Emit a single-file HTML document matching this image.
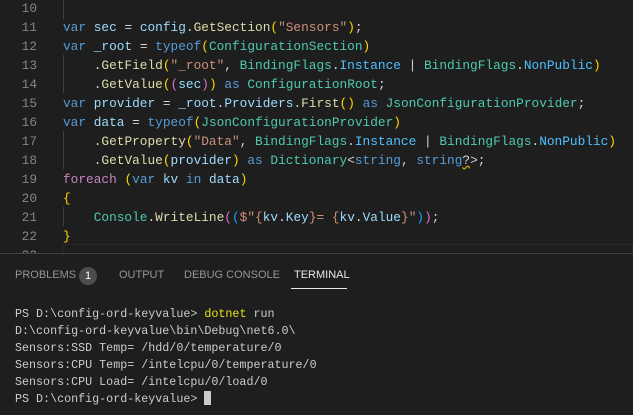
<!DOCTYPE html>
<html><head><meta charset="utf-8"><style>
body{margin:0;width:633px;height:414px;background:#1e1e1e;overflow:hidden;position:relative;font-family:"Liberation Mono",monospace}
.ed{position:absolute;left:0;top:0;width:633px;height:253px;overflow:hidden}
.l{position:absolute;left:0;height:19px;line-height:19px;font-size:12.8px;white-space:pre;color:#d4d4d4}
.n{position:absolute;left:0;width:37px;text-align:right;color:#858585}
.c{position:absolute;left:63px}
.g{position:absolute;left:63px;width:1px;background:#404040}
.k{color:#569cd6}.v{color:#9cdcfe}.f{color:#dcdcaa}.t{color:#4ec9b0}.s{color:#ce9178}.e{color:#4fc1ff}.p{color:#c586c0}
.y{color:#ffd700}.m{color:#da70d6}.b{color:#179fff}
.panel{position:absolute;left:0;top:253px;width:633px;height:161px;border-top:1px solid #414141}
.tab{position:absolute;top:15px;font-family:"Liberation Sans",sans-serif;font-size:11px;color:#969696;letter-spacing:0}
.term{position:absolute;left:15px;font-size:11.7px;color:#cccccc;white-space:pre;line-height:17px}
</style></head><body>
<div class="ed">
<div class="g" style="top:0;height:19px"></div>
<div class="g" style="top:55px;height:38px"></div>
<div class="g" style="top:131px;height:38px"></div>
<div class="g" style="top:207px;height:19px"></div>
<div class="g" style="top:245px;height:19px"></div>
<div style="position:absolute;left:63px;top:244px;width:570px;height:19px;border:1px solid #282828;box-sizing:border-box"></div>
<div class="l" style="top:-1.5px"><span class="n">10</span></div>
<div class="l" style="top:17.5px"><span class="n">11</span><span class="c"><span class="k">var</span> <span class="v">sec</span> = <span class="v">config</span>.<span class="f">GetSection</span><span class="y">(</span><span class="s">"Sensors"</span><span class="y">)</span>;</span></div>
<div class="l" style="top:36.5px"><span class="n">12</span><span class="c"><span class="k">var</span> <span class="v">_root</span> = <span class="k">typeof</span><span class="y">(</span><span class="t">ConfigurationSection</span><span class="y">)</span></span></div>
<div class="l" style="top:55.5px"><span class="n">13</span><span class="c">    .<span class="f">GetField</span><span class="y">(</span><span class="s">"_root"</span>, <span class="t">BindingFlags</span>.<span class="e">Instance</span> | <span class="t">BindingFlags</span>.<span class="e">NonPublic</span><span class="y">)</span></span></div>
<div class="l" style="top:74.5px"><span class="n">14</span><span class="c">    .<span class="f">GetValue</span><span class="y">(</span><span class="m">(</span><span class="v">sec</span><span class="m">)</span><span class="y">)</span> <span class="k">as</span> <span class="t">ConfigurationRoot</span>;</span></div>
<div class="l" style="top:93.5px"><span class="n">15</span><span class="c"><span class="k">var</span> <span class="v">provider</span> = <span class="v">_root</span>.<span class="v">Providers</span>.<span class="f">First</span><span class="y">()</span> <span class="k">as</span> <span class="t">JsonConfigurationProvider</span>;</span></div>
<div class="l" style="top:112.5px"><span class="n">16</span><span class="c"><span class="k">var</span> <span class="v">data</span> = <span class="k">typeof</span><span class="y">(</span><span class="t">JsonConfigurationProvider</span><span class="y">)</span></span></div>
<div class="l" style="top:131.5px"><span class="n">17</span><span class="c">    .<span class="f">GetProperty</span><span class="y">(</span><span class="s">"Data"</span>, <span class="t">BindingFlags</span>.<span class="e">Instance</span> | <span class="t">BindingFlags</span>.<span class="e">NonPublic</span><span class="y">)</span></span></div>
<div class="l" style="top:150.5px"><span class="n">18</span><span class="c">    .<span class="f">GetValue</span><span class="y">(</span><span class="v">provider</span><span class="y">)</span> <span class="k">as</span> <span class="t">Dictionary</span>&lt;<span class="k">string</span>, <span class="k">string</span><span style="text-decoration:underline wavy #cca700">?</span>&gt;;</span></div>
<div class="l" style="top:169.5px"><span class="n">19</span><span class="c"><span class="p">foreach</span> <span class="y">(</span><span class="k">var</span> <span class="v">kv</span> <span class="k">in</span> <span class="v">data</span><span class="y">)</span></span></div>
<div class="l" style="top:188.5px"><span class="n">20</span><span class="c"><span class="y">{</span></span></div>
<div class="l" style="top:207.5px"><span class="n">21</span><span class="c">    <span class="t">Console</span>.<span class="f">WriteLine</span><span class="m">(</span><span class="b">(</span><span class="s">$"</span><span class="s">{</span><span class="v">kv</span>.<span class="v">Key</span><span class="s">}</span><span class="s">= </span><span class="s">{</span><span class="v">kv</span>.<span class="v">Value</span><span class="s">}</span><span class="s">"</span><span class="b">)</span><span class="m">)</span>;</span></div>
<div class="l" style="top:226.5px"><span class="n">22</span><span class="c"><span class="y">}</span></span></div>
<div class="l" style="top:245.5px"><span class="n">23</span></div>
</div>
<div class="panel">
<span class="tab" style="left:15px">PROBLEMS</span>
<span style="position:absolute;left:79px;top:13px;width:18px;height:18px;border-radius:9px;background:#4d4d4d;color:#fff;font-family:'Liberation Sans',sans-serif;font-size:11px;text-align:center;line-height:18px">1</span>
<span class="tab" style="left:119px">OUTPUT</span>
<span class="tab" style="left:184px">DEBUG CONSOLE</span>
<span class="tab" style="left:294px;color:#e7e7e7">TERMINAL</span>
<div style="position:absolute;left:291px;top:34px;width:56px;height:1px;background:#e7e7e7"></div>
<div class="term" style="top:52px">PS D:\config-ord-keyvalue&gt; <span style="color:#e5e510">dotnet</span> run
D:\config-ord-keyvalue\bin\Debug\net6.0\
Sensors:SSD Temp= /hdd/0/temperature/0
Sensors:CPU Temp= /intelcpu/0/temperature/0
Sensors:CPU Load= /intelcpu/0/load/0
PS D:\config-ord-keyvalue&gt; <span style="display:inline-block;width:7px;height:14px;background:#cccccc;vertical-align:-3px"></span></div>
</div>
</body></html>
